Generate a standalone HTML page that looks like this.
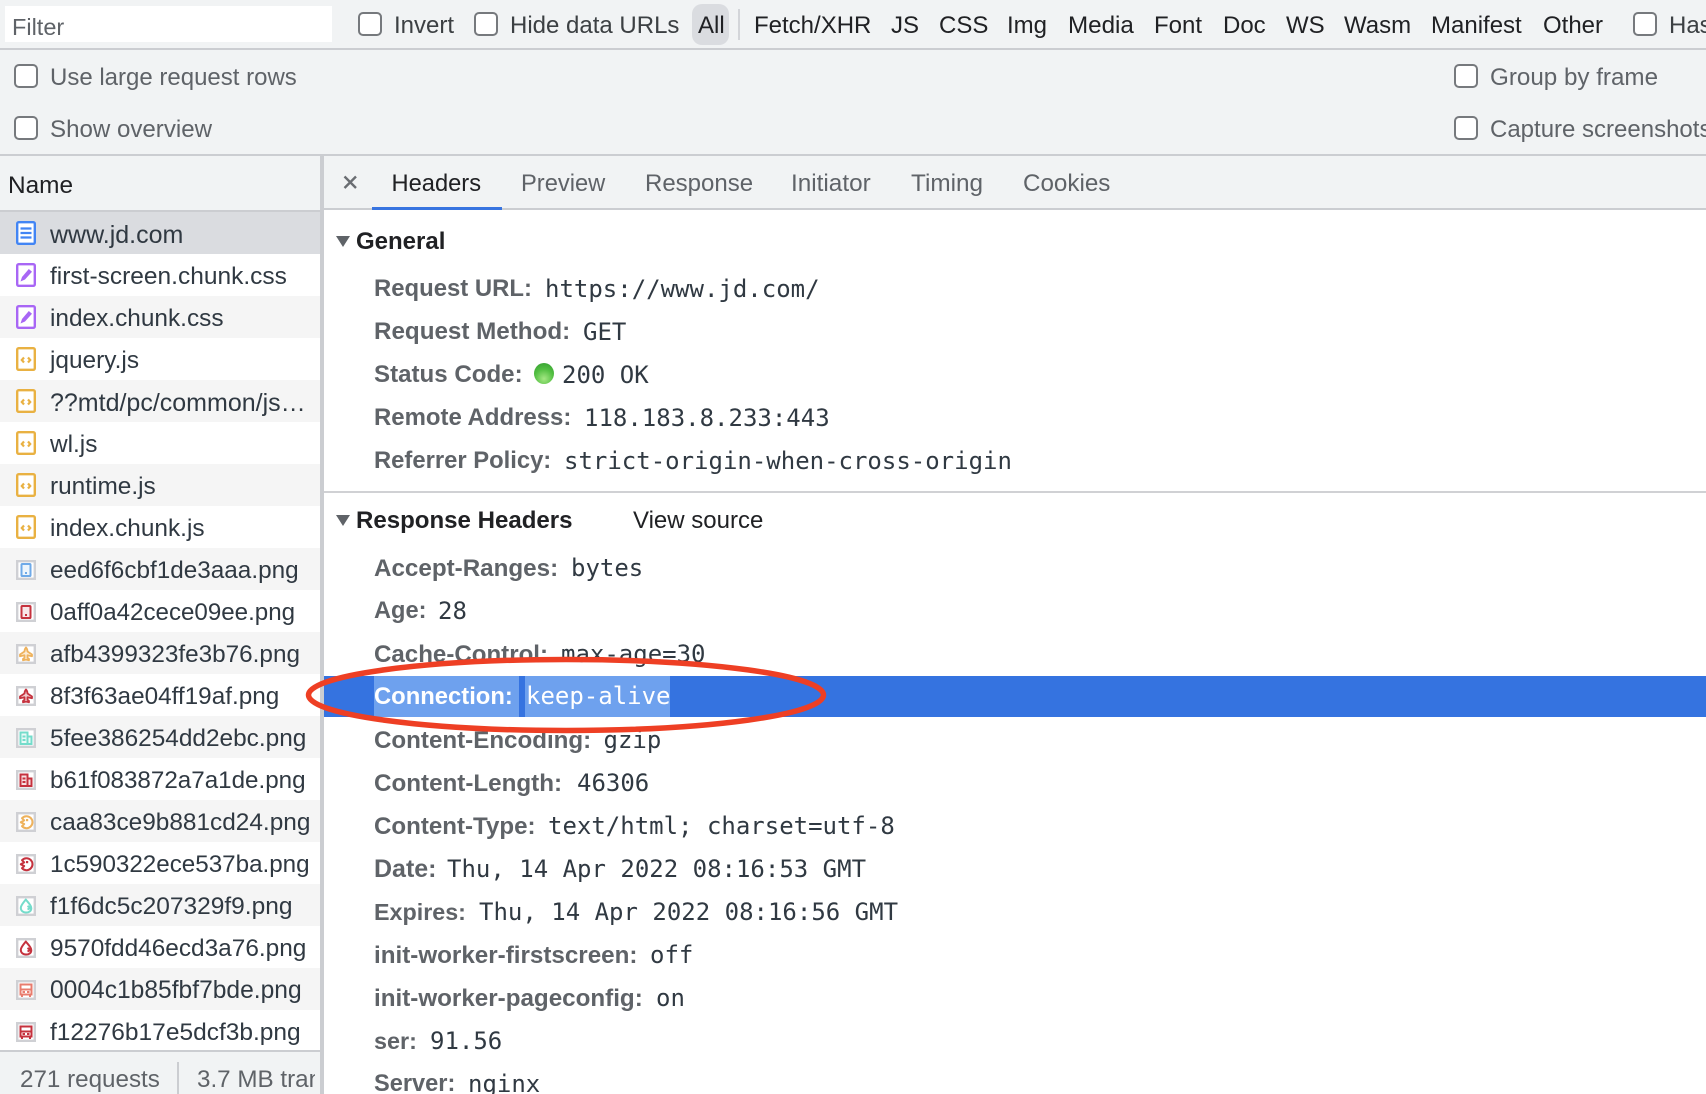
<!DOCTYPE html>
<html>
<head>
<meta charset="utf-8">
<title>Network</title>
<style>
html,body{margin:0;padding:0;width:1706px;height:1094px;overflow:hidden;background:#fff}
body{position:relative;font-family:"Liberation Sans",sans-serif;font-size:24px;color:#303942}
.a{position:absolute;white-space:nowrap}
.bar{position:absolute;background:#f1f3f4}
.line{position:absolute;background:#cbcdd1}
.t{position:absolute;white-space:nowrap;line-height:30px;height:30px;color:#202124;top:11px}
.cb{position:absolute;width:20px;height:20px;border:2px solid #76797d;border-radius:5px;background:#fff}
.g{color:#5f6368}
.tab{position:absolute;top:169px;line-height:30px;font-size:24px;color:#5f6368;white-space:nowrap}
.row{position:absolute;left:0;width:320px;height:42px;line-height:42px;background:#fff}
.row.e{background:#f5f5f5}
.row.sel{background:#dadce0}
.row span{position:absolute;left:50px;top:1.5px;font-size:24.4px;white-space:nowrap;color:#303942}
.row svg{position:absolute;left:16px;top:9px}
.row svg.i{top:12px}
.h{position:absolute;left:374px;height:43px;line-height:43px;font-weight:bold;color:#5f6368;white-space:nowrap;font-size:24px}
.v{position:absolute;height:43px;line-height:43px;font-family:"DejaVu Sans Mono","Liberation Mono",monospace;font-size:24px;color:#303942;white-space:nowrap}
.sec{position:absolute;left:356px;font-weight:bold;color:#202124;line-height:30px;font-size:24px;white-space:nowrap}
.tri{position:absolute;left:336px;width:0;height:0;border-left:7px solid transparent;border-right:7px solid transparent;border-top:11px solid #5f6368}
</style>
</head>
<body>
<svg width="0" height="0" style="position:absolute">
<defs>
<g id="box"><rect x="1.2" y="1.2" width="17.6" height="17.6" fill="#fff" stroke="#cfd0d4" stroke-width="2.4"/></g>
<g id="phone"><use href="#box"/><rect x="5.5" y="4" width="9" height="12" rx=".8" fill="currentColor" fill-opacity=".12" stroke="currentColor" stroke-width="2"/><rect x="9" y="12" width="2" height="2" fill="currentColor"/></g>
<g id="plane"><use href="#box"/><path d="M10 3.5C11.2 4.8 11.5 5.8 11.5 7.5L16 10.5V12.3L11.5 11.3V13.8L13 15V16.3L10 15.6L7 16.3V15L8.5 13.8V11.3L4 12.3V10.5L8.5 7.5C8.5 5.8 8.8 4.8 10 3.5Z" fill="currentColor" fill-opacity=".25" stroke="currentColor" stroke-width="1.8" stroke-linejoin="round"/></g>
<g id="bld"><use href="#box"/><path d="M4.5 4.5H11.5V16H4.5ZM11.5 8.5H15.5V16H11.5" fill="currentColor" fill-opacity=".15" stroke="currentColor" stroke-width="2"/><rect x="6.5" y="7.5" width="3" height="2" fill="currentColor"/><rect x="6.5" y="11" width="3" height="2" fill="currentColor"/></g>
<g id="face"><use href="#box"/><path d="M6 6.2A6 6 0 1 1 6 14.2L8.2 12L4.8 10.3L8.2 8.4Z" fill="none" stroke="currentColor" stroke-width="2" stroke-linejoin="round"/><rect x="10" y="7" width="2.2" height="2.2" fill="currentColor"/></g>
<g id="drop"><use href="#box"/><path d="M9.8 3.5C11.5 6 15.3 9 15.3 12.2C15.3 15 13 16.5 10 16.5C7 16.5 4.8 14.6 4.8 12C4.8 9 8 6.2 9.8 3.5ZM11.5 10L14.5 12L11.5 13.5" fill="none" stroke="currentColor" stroke-width="2" stroke-linejoin="round"/></g>
<g id="train"><use href="#box"/><path d="M4.5 4.5H15.5V14.5H4.5ZM4.5 9.5H15.5" fill="none" stroke="currentColor" stroke-width="2"/><path d="M6 14.5V17M14 14.5V17" stroke="currentColor" stroke-width="2"/><rect x="6.5" y="11" width="2.5" height="2" fill="currentColor"/><rect x="11" y="11" width="2.5" height="2" fill="currentColor"/></g>
<g id="js"><rect x="1.2" y="1.2" width="17.6" height="21.6" rx="1.5" fill="#fff" stroke="#e9b142" stroke-width="2.4"/><path d="M8 10.5L5.8 13L8 15.5M12 10.5L14.2 13L12 15.5" fill="none" stroke="#e9b142" stroke-width="2.2"/></g>
<g id="css"><rect x="1.2" y="1.2" width="17.6" height="21.6" rx="1.5" fill="#fff" stroke="#a866f5" stroke-width="2.4"/><path d="M12.8 6L16 8.8L9 16.5L4.5 18.5L6 14Z" fill="#a866f5"/></g>
</defs>
</svg>

<!-- toolbar -->
<div class="bar" style="left:0;top:0;width:1706px;height:156px"></div>
<div class="a" style="left:5px;top:6px;width:327px;height:36px;background:#fff"></div>
<div class="a g" style="left:12px;top:12px;line-height:30px;font-size:23.5px">Filter</div>
<div class="cb" style="left:358px;top:12px"></div>
<div class="t" style="left:394px;color:#3c4043">Invert</div>
<div class="cb" style="left:474px;top:12px"></div>
<div class="t" style="left:510px;color:#3c4043">Hide data URLs</div>
<div class="a" style="left:692px;top:4px;width:37px;height:41px;background:#dadce0;border-radius:10px"></div>
<div class="t" style="left:698px">All</div>
<div class="a" style="left:738px;top:9px;width:2px;height:31px;background:#d3d5d9"></div>
<div class="t" style="left:754px">Fetch/XHR</div>
<div class="t" style="left:891px">JS</div>
<div class="t" style="left:939px">CSS</div>
<div class="t" style="left:1007px">Img</div>
<div class="t" style="left:1068px;font-size:24.2px">Media</div>
<div class="t" style="left:1154px">Font</div>
<div class="t" style="left:1223px">Doc</div>
<div class="t" style="left:1286px">WS</div>
<div class="t" style="left:1344px">Wasm</div>
<div class="t" style="left:1431px">Manifest</div>
<div class="t" style="left:1543px">Other</div>
<div class="cb" style="left:1633px;top:12px"></div>
<div class="t" style="left:1669px;width:37px;overflow:hidden;color:#3c4043">Has blocked cookies</div>
<div class="line" style="left:0;top:48px;width:1706px;height:2px"></div>

<div class="cb" style="left:14px;top:64px"></div>
<div class="t g" style="left:50px;top:63px;color:#5f6368">Use large request rows</div>
<div class="cb" style="left:14px;top:116px"></div>
<div class="t g" style="left:50px;top:115px;color:#5f6368;font-size:24.1px">Show overview</div>
<div class="cb" style="left:1454px;top:64px"></div>
<div class="t g" style="left:1490px;top:63px;color:#5f6368;font-size:24.2px">Group by frame</div>
<div class="cb" style="left:1454px;top:116px"></div>
<div class="t g" style="left:1490px;top:115px;width:216px;overflow:hidden;color:#5f6368">Capture screenshots</div>
<div class="line" style="left:0;top:154px;width:1706px;height:2px"></div>

<!-- left pane -->
<div class="bar" style="left:0;top:156px;width:320px;height:54px"></div>
<div class="a" style="left:8px;top:171px;line-height:30px;color:#202124;font-size:24.4px">Name</div>
<div class="line" style="left:0;top:210px;width:320px;height:2px"></div>

<div class="row sel" style="top:212px"><svg width="20" height="24"><rect x="1.2" y="1.2" width="17.6" height="21.6" rx="1.5" fill="#fff" stroke="#4285f4" stroke-width="2.4"/><path d="M4.5 7.5H15.5M4.5 12H15.5M4.5 16.5H15.5" stroke="#4285f4" stroke-width="2.2"/></svg><span style="font-size:25px">www.jd.com</span></div>
<div class="row" style="top:254px"><svg width="20" height="24"><use href="#css"/></svg><span style="font-size:24.5px">first-screen.chunk.css</span></div>
<div class="row e" style="top:296px"><svg width="20" height="24"><use href="#css"/></svg><span>index.chunk.css</span></div>
<div class="row" style="top:338px"><svg width="20" height="24"><use href="#js"/></svg><span>jquery.js</span></div>
<div class="row e" style="top:380px"><svg width="20" height="24"><use href="#js"/></svg><span style="font-size:25px">??mtd/pc/common/js…</span></div>
<div class="row" style="top:422px"><svg width="20" height="24"><use href="#js"/></svg><span>wl.js</span></div>
<div class="row e" style="top:464px"><svg width="20" height="24"><use href="#js"/></svg><span>runtime.js</span></div>
<div class="row" style="top:506px"><svg width="20" height="24"><use href="#js"/></svg><span>index.chunk.js</span></div>
<div class="row e" style="top:548px"><svg class="i" width="20" height="20" style="color:#6faae8"><use href="#phone"/></svg><span style="font-size:24.3px">eed6f6cbf1de3aaa.png</span></div>
<div class="row" style="top:590px"><svg class="i" width="20" height="20" style="color:#c5323e"><use href="#phone"/></svg><span style="font-size:24.13px">0aff0a42cece09ee.png</span></div>
<div class="row e" style="top:632px"><svg class="i" width="20" height="20" style="color:#eeb25c"><use href="#plane"/></svg><span style="font-size:24.3px">afb4399323fe3b76.png</span></div>
<div class="row" style="top:674px"><svg class="i" width="20" height="20" style="color:#c5323e"><use href="#plane"/></svg><span style="font-size:24.3px">8f3f63ae04ff19af.png</span></div>
<div class="row e" style="top:716px"><svg class="i" width="20" height="20" style="color:#74dccb"><use href="#bld"/></svg><span>5fee386254dd2ebc.png</span></div>
<div class="row" style="top:758px"><svg class="i" width="20" height="20" style="color:#c5323e"><use href="#bld"/></svg><span style="font-size:24.2px">b61f083872a7a1de.png</span></div>
<div class="row e" style="top:800px"><svg class="i" width="20" height="20" style="color:#eeb25c"><use href="#face"/></svg><span>caa83ce9b881cd24.png</span></div>
<div class="row" style="top:842px"><svg class="i" width="20" height="20" style="color:#c5323e"><use href="#face"/></svg><span style="font-size:24.2px">1c590322ece537ba.png</span></div>
<div class="row e" style="top:884px"><svg class="i" width="20" height="20" style="color:#74dccb"><use href="#drop"/></svg><span style="font-size:24.5px">f1f6dc5c207329f9.png</span></div>
<div class="row" style="top:926px"><svg class="i" width="20" height="20" style="color:#c5323e"><use href="#drop"/></svg><span>9570fdd46ecd3a76.png</span></div>
<div class="row e" style="top:968px"><svg class="i" width="20" height="20" style="color:#e87c6e"><use href="#train"/></svg><span style="font-size:24.6px">0004c1b85fbf7bde.png</span></div>
<div class="row" style="top:1010px"><svg class="i" width="20" height="20" style="color:#c5323e"><use href="#train"/></svg><span style="font-size:24.5px">f12276b17e5dcf3b.png</span></div>

<div class="line" style="left:0;top:1050px;width:320px;height:2px"></div>
<div class="bar" style="left:0;top:1052px;width:320px;height:42px"></div>
<div class="a g" style="left:20px;top:1065px;line-height:30px;font-size:24.2px">271 requests</div>
<div class="line" style="left:177px;top:1062px;width:2px;height:32px"></div>
<div class="a g" style="left:197px;top:1065px;line-height:30px;font-size:24.2px;width:118px;overflow:hidden">3.7 MB transferred</div>

<div class="line" style="left:320px;top:156px;width:4px;height:938px"></div>

<!-- tabs -->
<div class="bar" style="left:324px;top:156px;width:1382px;height:52px"></div>
<div class="line" style="left:324px;top:208px;width:1382px;height:2px"></div>
<svg class="a" style="left:343px;top:175px" width="15" height="15"><path d="M1.5 1.5L13 13M13 1.5L1.5 13" stroke="#6a6d72" stroke-width="2.4"/></svg>
<div class="a" style="left:372px;top:207px;width:130px;height:3px;background:#3874e0"></div>
<div class="tab" style="left:391.5px;color:#202124;font-size:23.7px">Headers</div>
<div class="tab" style="left:521px;font-size:23.7px">Preview</div>
<div class="tab" style="left:645px">Response</div>
<div class="tab" style="left:791px;font-size:24.3px">Initiator</div>
<div class="tab" style="left:911px;font-size:24.3px">Timing</div>
<div class="tab" style="left:1023px;font-size:24.2px">Cookies</div>

<!-- General -->
<div class="tri" style="top:236px"></div>
<div class="sec" style="top:227px">General</div>
<div class="h" style="top:267px;font-size:23.9px">Request URL:</div><div class="v" style="top:267.5px;left:545px">https://www.jd.com/</div>
<div class="h" style="top:310px;font-size:24.2px">Request Method:</div><div class="v" style="top:310.5px;left:583px">GET</div>
<div class="h" style="top:353px;font-size:24.1px">Status Code:</div>
<div class="a" style="left:534px;top:363px;width:20px;height:21px;border-radius:50%;background:radial-gradient(circle at 50% 75%,#a4e783 0,#54c043 50%,#2f9a2e 100%)"></div>
<div class="v" style="top:353.5px;left:562px">200 OK</div>
<div class="h" style="top:396px;font-size:23.95px">Remote Address:</div><div class="v" style="top:396.5px;left:584px">118.183.8.233:443</div>
<div class="h" style="top:439px;font-size:23.8px">Referrer Policy:</div><div class="v" style="top:439.5px;left:564px">strict-origin-when-cross-origin</div>

<div class="a" style="left:324px;top:491px;width:1382px;height:2px;background:#d0d1d4"></div>

<!-- Response headers -->
<div class="tri" style="top:515px"></div>
<div class="sec" style="top:506px;font-size:24.05px">Response Headers</div>
<div class="a" style="left:633px;top:506px;line-height:30px;color:#202124;font-size:24px">View source</div>
<div class="h" style="top:547px;font-size:24.2px">Accept-Ranges:</div><div class="v" style="top:547px;left:571px">bytes</div>
<div class="h" style="top:590px;font-size:23.6px">Age:</div><div class="v" style="top:590px;left:438px">28</div>
<div class="h" style="top:633px;font-size:24.1px">Cache-Control:</div><div class="v" style="top:633px;left:561px">max-age=30</div>

<div class="a" style="left:324px;top:676px;width:1382px;height:41px;background:#3573e0"></div>
<div class="a" style="left:374px;top:676px;width:145px;height:41px;background:#6ea1ee"></div>
<div class="a" style="left:525px;top:676px;width:145px;height:41px;background:#6ea1ee"></div>
<div class="h" style="top:675px;color:#fff;font-size:23.8px">Connection:</div><div class="v" style="top:675px;left:526px;color:#fff">keep-alive</div>

<div class="h" style="top:719px;font-size:24.15px">Content-Encoding:</div><div class="v" style="top:719px;left:603.5px">gzip</div>
<div class="h" style="top:762px;font-size:24.2px">Content-Length:</div><div class="v" style="top:762px;left:577px">46306</div>
<div class="h" style="top:805px;font-size:24.1px">Content-Type:</div><div class="v" style="top:805px;left:548px">text/html; charset=utf-8</div>
<div class="h" style="top:848px;font-size:25px">Date:</div><div class="v" style="top:848px;left:447px">Thu, 14 Apr 2022 08:16:53 GMT</div>
<div class="h" style="top:891px;font-size:23.3px">Expires:</div><div class="v" style="top:891px;left:479px">Thu, 14 Apr 2022 08:16:56 GMT</div>
<div class="h" style="top:934px;font-size:24.2px">init-worker-firstscreen:</div><div class="v" style="top:934px;left:650px">off</div>
<div class="h" style="top:977px;font-size:24.2px">init-worker-pageconfig:</div><div class="v" style="top:977px;left:656px">on</div>
<div class="h" style="top:1020px;font-size:23.4px">ser:</div><div class="v" style="top:1020px;left:430px">91.56</div>
<div class="h" style="top:1063px;font-size:23.6px">Server:</div><div class="v" style="top:1063px;left:468px">nginx</div>

<!-- red annotation -->
<svg class="a" style="left:0;top:0" width="1706" height="1094">
<ellipse cx="566" cy="695" rx="257.5" ry="35.5" fill="none" stroke="#ee3f24" stroke-width="5.5"/>
</svg>
</body>
</html>
